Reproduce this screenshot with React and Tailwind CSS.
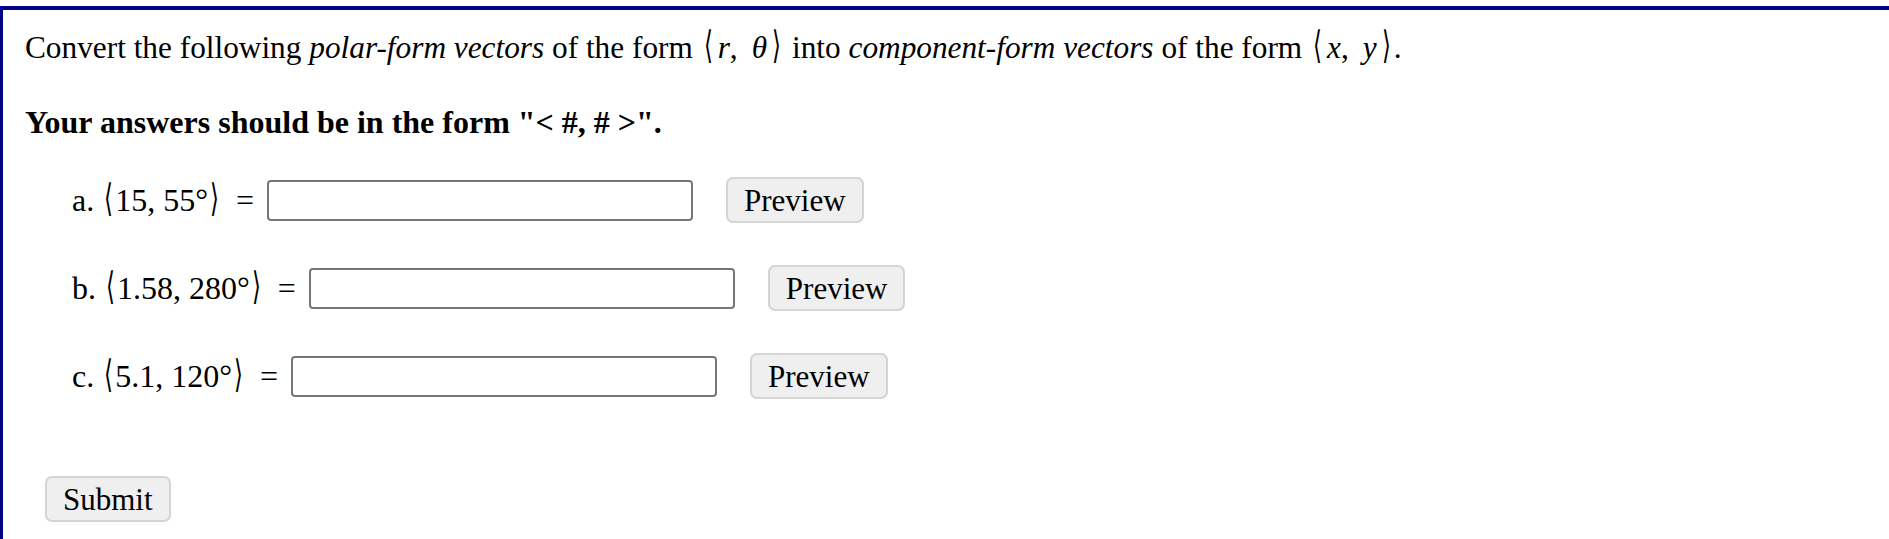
const serif = { fontFamily: '"Liberation Serif", "Times New Roman", serif' }

function Angle({ children, wide }) {
  const br = 'text-[1.2em] leading-[0] font-[\'DejaVu_Serif\',serif] font-light inline-block scale-x-[0.6]'
  return (
    <span className="inline">
      <span className={wide ? br + ' mr-[2px]' : br + ' -mx-[1px]'}>⟨</span>
      {children}
      <span className={wide ? br + ' ml-[2px]' : br + ' -mx-[1px]'}>⟩</span>
    </span>
  )
}

function Row({ label, math }) {
  return (
    <div className="flex items-center h-[46px] pl-[47px]">
      <span className="text-[32px] leading-[46px] whitespace-nowrap">
        {label} <Angle>{math}</Angle>
      </span>
      <span className="ml-[15px] mr-[13px] text-[32px] leading-[46px]">=</span>
      <input
        type="text"
        className="w-[426px] h-[41px] border-2 border-[#767676] rounded-[4px] bg-white outline-none"
      />
      <button className="ml-[33px] h-[46px] px-[16px] text-[31px] leading-none bg-[#efefef] border-2 border-[#d4d4d4] rounded-[7px]">
        Preview
      </button>
    </div>
  )
}

export default function App() {
  return (
    <div className="min-h-screen bg-white text-black pt-[6px] overflow-hidden" style={serif}>
      <div className="border-t-[4px] border-l-[3px] border-[#000080] pl-[22px] pt-[18px] min-h-[540px]">
        <p className="text-[31.3px] leading-[40px] whitespace-nowrap">
          Convert the following <i>polar-form vectors</i> of the form{' '}
          <Angle wide><i>r</i>,&thinsp;&nbsp;<i>θ</i></Angle> into <i>component-form vectors</i> of the form{' '}
          <Angle wide><i>x</i>,&thinsp;&nbsp;<i>y</i></Angle>.
        </p>
        <p className="mt-[34px] text-[32px] leading-[40px] font-bold">
          Your answers should be in the form "&lt; #, # &gt;".
        </p>
        <div className="mt-[35px] flex flex-col gap-[42px]">
          <Row label="a." math={<>15,&nbsp;55°</>} />
          <Row label="b." math={<>1.58,&nbsp;280°</>} />
          <Row label="c." math={<>5.1,&nbsp;120°</>} />
        </div>
        <button className="ml-[20px] mt-[77px] h-[46px] px-[16px] text-[31px] leading-none bg-[#efefef] border-2 border-[#d4d4d4] rounded-[7px]">
          Submit
        </button>
      </div>
    </div>
  )
}
